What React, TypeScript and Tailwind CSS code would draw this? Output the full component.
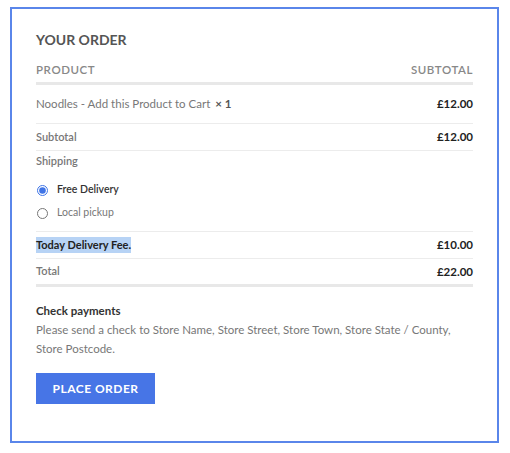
import React from "react";

const rows = [
  { label: "Subtotal", value: "£12.00" },
];

export default function App() {
  return (
    <div className="w-[510px] h-[453px] bg-white pt-[7px] pl-[10px] font-['Lato','Liberation_Sans',sans-serif] text-[11.5px] text-[#777]">
      <div className="w-[489px] h-[436px] border-2 border-[#5a86ea] px-6 pt-[21px]">
        <h3 className="text-[14px] font-bold text-[#555] leading-[20px] h-[20px]">YOUR ORDER</h3>

        <div className="mt-[10px] h-[20px] flex items-center justify-between text-[11.5px] font-semibold tracking-[0.05em] text-[#888]">
          <span>PRODUCT</span>
          <span>SUBTOTAL</span>
        </div>
        <div className="mt-[2px] h-[3px] bg-[#e8e8e8]" />

        <div className="h-[39px] flex items-center justify-between border-b border-[#ececec]">
          <span>
            Noodles - Add this Product to Cart <span className="ml-[2px] font-bold text-[#555]">× 1</span>
          </span>
          <span className="font-bold text-[#222]">£12.00</span>
        </div>

        {rows.map((r) => (
          <div key={r.label} className="h-[27px] flex items-center justify-between border-b border-[#ececec]">
            <span className="font-semibold text-[11px]">{r.label}</span>
            <span className="font-bold text-[#222]">{r.value}</span>
          </div>
        ))}

        <div className="h-[81px] border-b border-[#ececec] pt-[2px]">
          <div className="h-[16px] leading-[16px] font-semibold text-[11px]">Shipping</div>
          <div className="mt-[13px] flex items-center h-[16px]">
            <input type="radio" defaultChecked name="ship" className="m-0 ml-[1px] w-[11px] h-[11px] accent-[#3f74e6]" />
            <span className="ml-[9px] font-semibold text-[10.5px] text-[#333]">Free Delivery</span>
          </div>
          <div className="mt-[7px] flex items-center h-[16px]">
            <input type="radio" name="ship" className="m-0 ml-[1px] w-[11px] h-[11px]" />
            <span className="ml-[9px] text-[10.5px]">Local pickup</span>
          </div>
        </div>

        <div className="h-[27px] flex items-center justify-between border-b border-[#ececec]">
          <span className="font-bold text-[11px] text-[#222] bg-[#b7d3f5]">Today Delivery Fee.</span>
          <span className="font-bold text-[#222]">£10.00</span>
        </div>

        <div className="h-[25px] flex items-center justify-between">
          <span className="font-semibold text-[11px]">Total</span>
          <span className="font-bold text-[#222]">£22.00</span>
        </div>
        <div className="h-[3px] bg-[#e8e8e8]" />

        <div className="mt-[15px] font-bold text-[11.5px] text-[#333] leading-[18px]">Check payments</div>
        <p className="text-[11.5px] leading-[19px]">
          Please send a check to Store Name, Store Street, Store Town, Store State / County, Store Postcode.
        </p>

        <button className="mt-[15px] w-[119px] h-[31px] bg-[#4775e6] text-white font-bold text-[12px] tracking-[0.04em]">
          PLACE ORDER
        </button>
      </div>
    </div>
  );
}
